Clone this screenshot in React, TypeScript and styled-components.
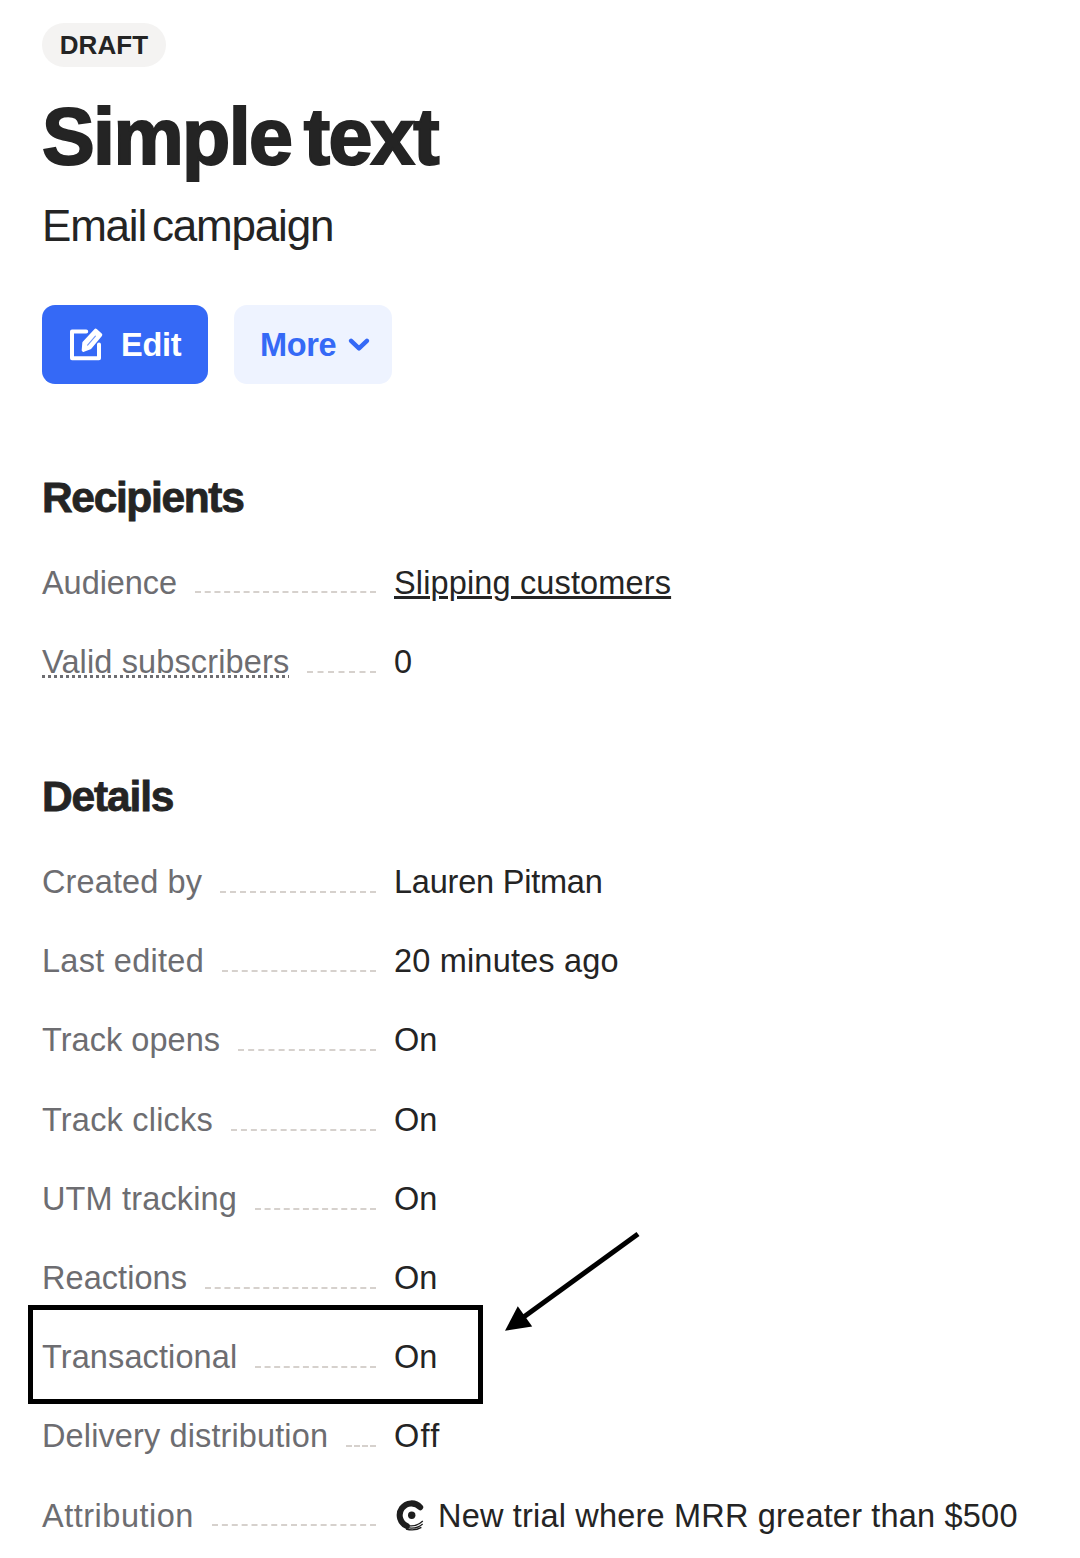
import React from "react";
import styled, { createGlobalStyle } from "styled-components";

const GlobalStyle = createGlobalStyle`
  * { box-sizing: border-box; }
  body {
    margin: 0;
    background: #ffffff;
    color: #242424;
    font-family: "Liberation Sans", Arial, sans-serif;
  }
`;

const Page = styled.main`
  display: flex;
  flex-direction: column;
  align-items: flex-start;
  width: 1080px;
  height: 1558px;
  padding: 23px 42px 0;
  overflow: hidden;
`;

const Badge = styled.span`
  display: flex;
  align-items: center;
  justify-content: center;
  width: 124px;
  height: 44px;
  border-radius: 22px;
  background: #f4f3f2;
  font-size: 26px;
  font-weight: 700;
  letter-spacing: 0.1px;
`;

const Title = styled.h1`
  margin: 25px 0 0;
  height: 90px;
  line-height: 90px;
  font-size: 79px;
  font-weight: 700;
  letter-spacing: -1.6px;
  word-spacing: -8px;
  white-space: nowrap;
  -webkit-text-stroke: 2px #242424;
`;

const Subtitle = styled.p`
  margin: 18px 0 0;
  height: 52px;
  line-height: 52px;
  font-size: 44px;
  letter-spacing: -1.2px;
  word-spacing: -5px;
  white-space: nowrap;
`;

const Actions = styled.div`
  display: flex;
  gap: 26px;
  margin-top: 53px;
`;

const Button = styled.button<{ $primary?: boolean }>`
  display: flex;
  align-items: center;
  gap: ${(p) => (p.$primary ? 18 : 11.5)}px;
  width: ${(p) => (p.$primary ? 166 : 158)}px;
  height: 79px;
  padding: 0 0 0 ${(p) => (p.$primary ? 27 : 26)}px;
  border: 0;
  border-radius: 13px;
  background: ${(p) => (p.$primary ? "#3569f6" : "#eef3ff")};
  color: ${(p) => (p.$primary ? "#ffffff" : "#3569f6")};
  font-family: inherit;
  font-size: 32.5px;
  line-height: 38px;
  font-weight: 700;
  letter-spacing: ${(p) => (p.$primary ? -0.3 : -0.35)}px;
`;

const Section = styled.section<{ $top: number }>`
  margin-top: ${(p) => p.$top}px;
`;

const Heading = styled.h2<{ $track: number }>`
  margin: 0 0 22px;
  height: 46px;
  line-height: 46px;
  font-size: 42.5px;
  font-weight: 700;
  letter-spacing: ${(p) => p.$track}px;
  -webkit-text-stroke: 0.8px #242424;
`;

const Row = styled.div`
  position: relative;
  display: flex;
  align-items: center;
  height: 79.2px;
  font-size: 32.5px;
  line-height: 40px;
  white-space: nowrap;
`;

const Term = styled.div`
  display: flex;
  align-items: center;
  gap: 18px;
  width: 334px;
  margin-right: 18px;
  color: #6d6d71;
`;

const Label = styled.span<{ $track: number; $hint?: boolean }>`
  letter-spacing: ${(p) => p.$track}px;
  ${(p) =>
    p.$hint &&
    `background: repeating-linear-gradient(90deg, #6d6d71 0 3px, transparent 3px 6px) 0 100% / 100% 3px no-repeat;
     height: 36px; line-height: 40px; margin-bottom: -4px; margin-top: -8px;`}
`;

const Leader = styled.span`
  flex: 1;
  height: 21.8px;
  border-bottom: 2px dashed #d6d1cd;
`;

const Value = styled.span<{ $track: number }>`
  display: flex;
  align-items: center;
  gap: 12px;
  letter-spacing: ${(p) => p.$track}px;
`;

const Link = styled.a`
  color: inherit;
  text-decoration: underline;
  text-decoration-thickness: 3px;
  text-underline-offset: 2px;
`;

const Highlight = styled.div`
  position: absolute;
  left: -14px;
  top: -12.7px;
  width: 455px;
  height: 99px;
  border: 5px solid #000000;
`;

const Arrow = styled.svg`
  position: absolute;
  left: 458px;
  top: -88.7px;
`;

const EditIcon = () => (
  <svg width="34" height="34" viewBox="0 0 34 34" fill="none">
    <path d="M17.2 3.4H3V30.2H30V16.6" stroke="#fff" strokeWidth="4" strokeLinecap="round" strokeLinejoin="round" />
    <path d="M26.6 2.4 31.6 6.8 21 19.6 14.4 22.2 15 14.8Z" fill="#fff" stroke="#fff" strokeWidth="3.4" strokeLinejoin="round" />
    <path d="M18.6 17.2 26.4 8.2" stroke="#3569f6" strokeWidth="1.1" strokeLinecap="round" strokeOpacity="0.7" />
  </svg>
);

const ChevronIcon = () => (
  <svg width="22" height="14" viewBox="0 0 22 14" fill="none">
    <path d="M3.1 2.8 11 10.4 18.9 2.8" stroke="#3569f6" strokeWidth="4.4" strokeLinecap="round" strokeLinejoin="round" />
  </svg>
);

const AttributionIcon = () => (
  <svg width="32" height="34" viewBox="0 0 32 34" fill="none">
    <path d="M26.2 8.2A11.8 11.8 0 1 0 12.8 27" stroke="#1d1d1d" strokeWidth="6" strokeLinecap="round" />
    <path d="M13 26.3C19 27.8 25 25.6 28.8 22M12 28.4C19 30 25 28.4 28.6 25M12 30C18 31.6 23 31 27.4 28.4" stroke="#1d1d1d" strokeWidth="1.3" />
    <circle cx="17.7" cy="16.2" r="3.7" fill="#1d1d1d" />
  </svg>
);

interface Item {
  label: string;
  track: number;
  value: string;
  valueTrack?: number;
  hint?: boolean;
  link?: boolean;
  icon?: boolean;
  marked?: boolean;
}

const recipients: Item[] = [
  { label: "Audience", track: -0.06, value: "Slipping customers", valueTrack: 0.14, link: true },
  { label: "Valid subscribers", track: 0.13, value: "0", hint: true },
];

const details: Item[] = [
  { label: "Created by", track: 0.11, value: "Lauren Pitman", valueTrack: -0.22 },
  { label: "Last edited", track: 0.27, value: "20 minutes ago", valueTrack: 0.18 },
  { label: "Track opens", track: 0.05, value: "On" },
  { label: "Track clicks", track: 0.2, value: "On" },
  { label: "UTM tracking", track: 0.15, value: "On" },
  { label: "Reactions", track: 0.05, value: "On" },
  { label: "Transactional", track: 0.11, value: "On", marked: true },
  { label: "Delivery distribution", track: 0.12, value: "Off", valueTrack: 1.3 },
  { label: "Attribution", track: 0.51, value: "New trial where MRR greater than $500", valueTrack: 0.19, icon: true },
];

const Rows = ({ items }: { items: Item[] }) => (
  <>
    {items.map((it) => (
      <Row key={it.label}>
        <Term>
          <Label $track={it.track} $hint={it.hint}>{it.label}</Label>
          <Leader />
        </Term>
        <Value $track={it.valueTrack ?? 0}>
          {it.icon && <AttributionIcon />}
          {it.link ? <Link>{it.value}</Link> : <span>{it.value}</span>}
        </Value>
        {it.marked && (
          <>
            <Highlight />
            <Arrow width="146" height="108" viewBox="0 0 146 108">
              <path d="M138 4.9 22 89.3" stroke="#000" strokeWidth="5" />
              <path d="M5 101.8 17.8 77.3 32.2 97.5Z" fill="#000" />
            </Arrow>
          </>
        )}
      </Row>
    ))}
  </>
);

export default function App() {
  return (
    <>
      <GlobalStyle />
      <Page>
        <Badge>DRAFT</Badge>
        <Title>Simple text</Title>
        <Subtitle>Email campaign</Subtitle>
        <Actions>
          <Button $primary>
            <EditIcon />
            <span>Edit</span>
          </Button>
          <Button>
            <span>More</span>
            <ChevronIcon />
          </Button>
        </Actions>
        <Section $top={91}>
          <Heading $track={-1.35}>Recipients</Heading>
          <Rows items={recipients} />
        </Section>
        <Section $top={73.1}>
          <Heading $track={-1.15}>Details</Heading>
          <Rows items={details} />
        </Section>
      </Page>
    </>
  );
}
